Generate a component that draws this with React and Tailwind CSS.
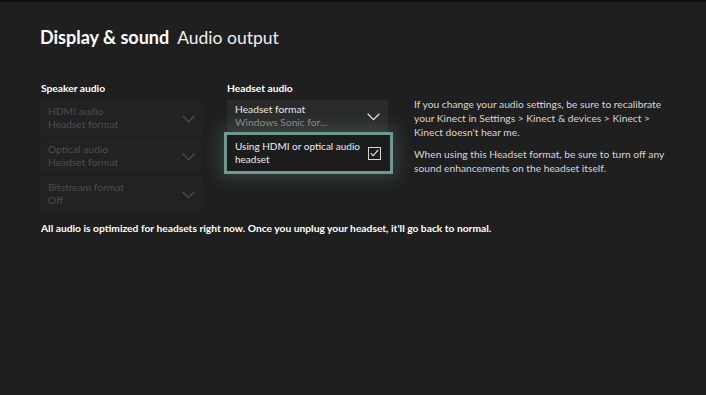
import React from "react";

const Chevron = ({ className }) => (
  <svg width="13" height="8" viewBox="0 0 13 8" className={className} fill="none">
    <path d="M0.7 0.7 L6.5 6.6 L12.3 0.7" stroke="currentColor" strokeWidth="1.3" />
  </svg>
);

const SpeakerItem = ({ title, sub }) => (
  <div className="flex h-[35px] items-center justify-between bg-[#222222] pl-[7px] pr-[8px]">
    <div className="flex flex-col leading-[13px] text-[10.25px] text-[#4d4d4d]">
      <span>{title}</span>
      <span>{sub}</span>
    </div>
    <Chevron className="text-[#4d4d4d] mt-[2px]" />
  </div>
);

export default function App() {
  return (
    <div
      className="w-[706px] h-[395px] bg-[#1f1f1f] border-t-[2px] border-[#0e0e0e] overflow-hidden text-white"
      style={{ fontFamily: 'Lato, "Open Sans", sans-serif' }}
    >
      <div className="pl-[40px] pt-[22px]">
        <div className="flex items-baseline gap-[8px] h-[24px]">
          <span className="text-[18px] font-bold">Display &amp; sound</span>
          <span className="text-[17.5px] font-normal text-[#f0f0f0]">Audio output</span>
        </div>

        <div className="mt-[34px] flex">
          <div className="w-[162px] ml-[1px]">
            <div className="h-[18px] text-[10.25px] font-bold leading-[12px]">Speaker audio</div>
            <div className="flex flex-col gap-[3px]">
              <SpeakerItem title="HDMI audio" sub="Headset format" />
              <SpeakerItem title="Optical audio" sub="Headset format" />
              <SpeakerItem title="Bitstream format" sub="Off" />
            </div>
          </div>

          <div className="w-[161px] ml-[24px]">
            <div className="h-[18px] text-[10.25px] font-bold leading-[12px]">Headset audio</div>
            <div className="flex h-[32px] items-center justify-between bg-[#2a2a2a] pl-[8px] pr-[8px]">
              <div className="flex flex-col leading-[13px] text-[10.25px]">
                <span className="text-[#e8e8e8]">Headset format</span>
                <span className="text-[#8a8a8a]">Windows Sonic for...</span>
              </div>
              <Chevron className="text-[#e0e0e0] mt-[2px]" />
            </div>
            <div className="-ml-[3px] -mr-[5px] h-[42px] border-[3px] border-[#6f9891] bg-[#1c1c1c] flex items-center justify-between pl-[8px] pr-[9px] shadow-[0_0_16px_5px_rgba(111,152,145,0.25)]">
              <div className="flex flex-col leading-[13px] text-[10px] text-[#eeeeee]">
                <span>Using HDMI or optical audio</span>
                <span>headset</span>
              </div>
              <div className="w-[13px] h-[13px] border border-[#d8d8d8] flex items-center justify-center">
                <svg width="9" height="8" viewBox="0 0 9 8" fill="none">
                  <path d="M0.8 4.2 L3.2 6.6 L8.3 0.8" stroke="#e8e8e8" strokeWidth="1.1" />
                </svg>
              </div>
            </div>
          </div>

          <div className="ml-[26px] w-[252px] pt-[15px] text-[10.25px] leading-[14px] text-[#d6d6d6]">
            <p>
              If you change your audio settings, be sure to recalibrate your Kinect in Settings &gt; Kinect &amp; devices &gt; Kinect &gt; Kinect doesn't hear me.
            </p>
            <p className="mt-[8px]">
              When using this Headset format, be sure to turn off any sound enhancements on the headset itself.
            </p>
          </div>
        </div>

        <div className="mt-[10px] ml-[1px] text-[10.25px] font-bold leading-[14px] text-white">
          All audio is optimized for headsets right now. Once you unplug your headset, it'll go back to normal.
        </div>
      </div>
    </div>
  );
}
